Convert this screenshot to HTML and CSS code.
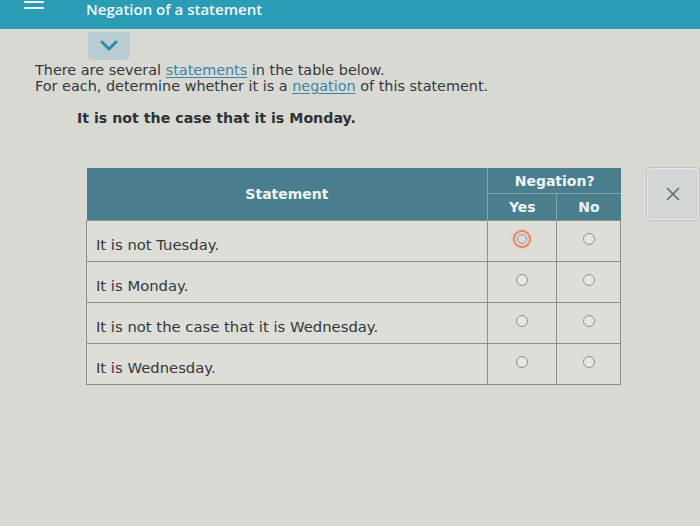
FILE: index.html
```html
<!DOCTYPE html>
<html>
<head>
<meta charset="utf-8">
<link rel="stylesheet" href="styles.css">
</head>
<body>
<div class="topbar">
  <div class="hamburger"><span></span><span></span></div>
  <div class="title">Negation of a statement</div>
</div>
<div class="tab">
  <svg width="18" height="12" viewBox="0 0 18 12"><path d="M2 2 L9 9 L16 2" fill="none" stroke="#2b8ea8" stroke-width="3" stroke-linecap="round" stroke-linejoin="round"/></svg>
</div>
<div class="content">
  <p class="intro">There are several <span class="link">statements</span> in the table below.<br>For each, determine whether it is a <span class="link">negation</span> of this statement.</p>
  <p class="stmt">It is not the case that it is Monday.</p>
  <div class="work">
    <table class="grid">
      <thead>
        <tr>
          <th class="hstmt" rowspan="2">Statement</th>
          <th class="hneg" colspan="2">Negation?</th>
        </tr>
        <tr>
          <th class="hyes">Yes</th>
          <th class="hno">No</th>
        </tr>
      </thead>
      <tbody>
        <tr><td class="txt">It is not Tuesday.</td><td class="rad"><span class="radio sel"><span></span></span></td><td class="rad"><span class="radio"></span></td></tr>
        <tr><td class="txt">It is Monday.</td><td class="rad"><span class="radio"></span></td><td class="rad"><span class="radio"></span></td></tr>
        <tr><td class="txt">It is not the case that it is Wednesday.</td><td class="rad"><span class="radio"></span></td><td class="rad"><span class="radio"></span></td></tr>
        <tr><td class="txt">It is Wednesday.</td><td class="rad"><span class="radio"></span></td><td class="rad"><span class="radio"></span></td></tr>
      </tbody>
    </table>
    <div class="xbtn">
      <svg width="14" height="14" viewBox="0 0 14 14"><path d="M1.5 1.5 L12.5 12.5 M12.5 1.5 L1.5 12.5" stroke="#5f6b70" stroke-width="1.6" stroke-linecap="round"/></svg>
    </div>
  </div>
</div>
</body>
</html>
```
FILE: styles.css
```css
html, body {
  margin: 0;
  padding: 0;
  background: #d9d9d4;
  height: 100%;
}
body {
  font-family: "DejaVu Sans", Verdana, sans-serif;
  color: #2f3336;
}
.topbar {
  height: 29px;
  background: #2a9cb4;
  display: flex;
  align-items: flex-start;
}
.hamburger {
  width: 20px;
  margin-left: 24px;
  display: flex;
  flex-direction: column;
  gap: 4px;
  padding-top: 1px;
}
.hamburger span {
  display: block;
  height: 2px;
  background: #e8f6f9;
  border-radius: 1px;
}
.title {
  margin-left: 42px;
  font-family: "Open Sans", sans-serif;
  font-weight: 600;
  font-size: 15px;
  line-height: 18px;
  color: #f1f8fa;
}
.tab {
  margin-left: 88px;
  width: 42px;
  height: 28px;
  margin-top: 3px;
  background: #b8ccd1;
  border-radius: 0 0 5px 5px;
  display: flex;
  align-items: center;
  justify-content: center;
}
.content {
  padding-left: 35px;
}
.intro {
  margin: 2px 0 0 0;
  font-size: 14.4px;
  line-height: 16px;
  color: #33373a;
}
.link {
  color: #3a86a6;
  text-decoration: underline;
  text-underline-offset: 2px;
}
.stmt {
  margin: 16px 0 0 42px;
  font-weight: bold;
  font-size: 14.2px;
  line-height: 17px;
  color: #2e3235;
}
.work {
  display: flex;
  align-items: flex-start;
  margin-top: 41px;
  margin-left: 51px;
  gap: 25px;
}
.grid {
  border-collapse: collapse;
  background: #deded9;
}
.grid th {
  background: #4a7e8c;
  color: #eef4f6;
  font-weight: bold;
  font-size: 14px;
  padding: 0;
}
.hstmt {
  width: 404px;
  height: 52px;
  border-right: 1px solid #7fa6b1;
}
.hneg {
  height: 25px;
  border-bottom: 1px solid #7fa6b1;
}
.hyes {
  width: 68px;
  height: 26px;
  border-right: 1px solid #7fa6b1;
}
.hno {
  width: 64px;
}
.grid td {
  border: 1px solid #8d8f8f;
  height: 41px;
  padding: 0;
  box-sizing: border-box;
}
.txt {
  padding-left: 9px !important;
  padding-top: 7px !important;
  font-size: 14.8px;
  color: #33373a;
}
.rad {
  text-align: center;
  vertical-align: middle;
}
.radio {
  display: inline-block;
  width: 10px;
  height: 10px;
  border: 1.4px solid #8c8f90;
  border-radius: 50%;
  background: #e6e6e2;
  vertical-align: middle;
  position: relative;
  top: -3px;
}
.radio.sel {
  width: 14px;
  height: 14px;
  border: 2px solid #e0876a;
  background: #e6d9d3;
  display: inline-flex;
  align-items: center;
  justify-content: center;
  box-shadow: 0 0 3px rgba(230, 130, 100, 0.5);
}
.radio.sel span {
  width: 8px;
  height: 8px;
  border: 1.4px solid #9a8e8a;
  border-radius: 50%;
  background: #dcdcd8;
}
.xbtn {
  width: 52px;
  height: 52px;
  border: 1.5px solid #bfc1c0;
  border-radius: 5px;
  background: #d3d6d6;
  display: flex;
  align-items: center;
  justify-content: center;
  box-shadow: inset 0 0 0 1px #e6e7e6;
  margin-top: -1px;
}
```
